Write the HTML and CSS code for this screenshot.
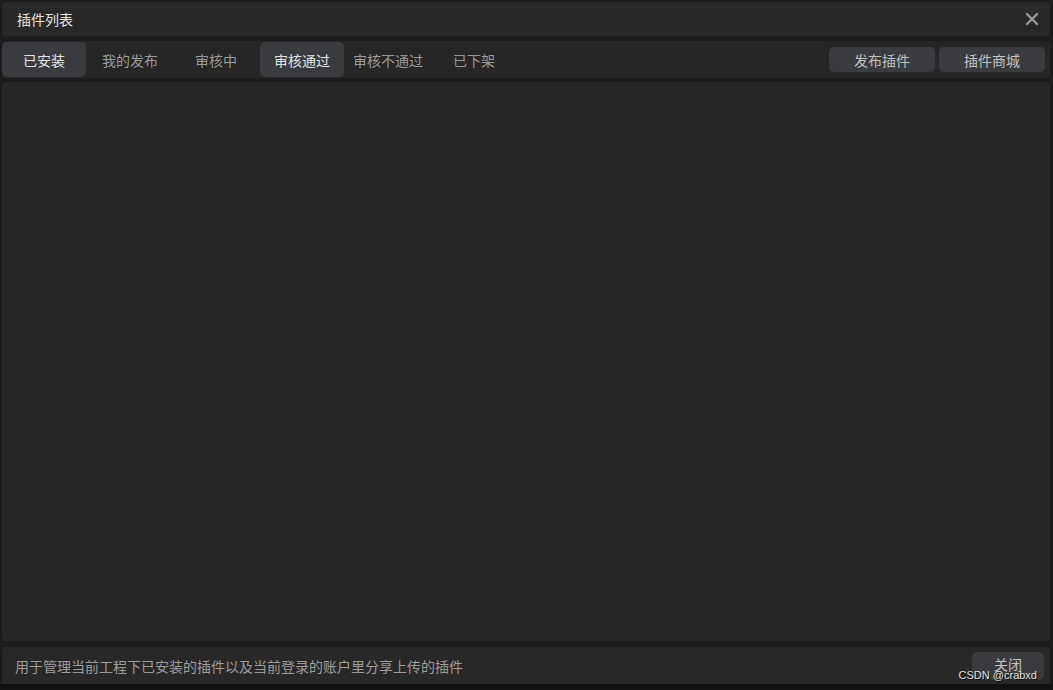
FILE: index.html
```html
<!DOCTYPE html>
<html>
<head>
  <meta charset="utf-8">
  <title>插件列表</title>
  <link rel="stylesheet" href="styles.css">
</head>
<body>
  <div class="window">
    <div class="title-bar">
      <span class="title">插件列表</span>
      <svg class="close-icon" width="14" height="14" viewBox="0 0 14 14">
        <path d="M2 2 L12 12 M12 2 L2 12" stroke="#9a9a9a" stroke-width="2.4" stroke-linecap="round"/>
      </svg>
    </div>

    <div class="tab-bar">
      <div class="tabs">
        <div class="tab active">已安装</div>
        <div class="tab">我的发布</div>
        <div class="tab">审核中</div>
        <div class="tab active">审核通过</div>
        <div class="tab">审核不通过</div>
        <div class="tab">已下架</div>
      </div>
      <div class="actions">
        <button class="btn">发布插件</button>
        <button class="btn">插件商城</button>
      </div>
    </div>

    <div class="content"></div>

    <div class="footer">
      <span class="hint">用于管理当前工程下已安装的插件以及当前登录的账户里分享上传的插件</span>
      <button class="btn close-btn">关闭</button>
    </div>
  </div>
  <div class="watermark">CSDN @crabxd</div>
</body>
</html>
```

FILE: styles.css
```css
body {
  margin: 0;
  background-color: #111;
  font-family: "Microsoft YaHei", "Noto Sans CJK SC", sans-serif;
  font-size: 14px;
  width: 1053px;
  height: 690px;
  overflow: hidden;
  position: relative;
}

.window {
  background-color: #1c1c1c;
  height: 684px;
  box-sizing: border-box;
  padding: 2px 3px 0 2px;
  display: flex;
  flex-direction: column;
}

.title-bar {
  height: 34px;
  background-color: #282828;
  border-radius: 4px;
  display: flex;
  align-items: center;
  justify-content: space-between;
  padding: 0 11px 0 15px;
  flex-shrink: 0;
}

.title {
  color: #e2e2e2;
}

.close-icon {
  display: block;
}

.tab-bar {
  height: 37px;
  margin-top: 5px;
  background-color: #262626;
  border-radius: 4px;
  display: flex;
  align-items: center;
  justify-content: space-between;
  padding: 0 5px 0 0;
  flex-shrink: 0;
}

.tabs {
  display: flex;
  gap: 2px;
}

.tab {
  width: 84px;
  height: 35px;
  line-height: 36px;
  text-align: center;
  color: #9a9a9a;
  border-radius: 5px;
}

.tab.active {
  background-color: #3a3b3e;
  color: #e4e4e4;
}

.actions {
  display: flex;
  gap: 4px;
}

.btn {
  font-family: inherit;
  font-size: 14px;
  background-color: #3a3b3e;
  color: #c2c2c2;
  border: none;
  border-radius: 5px;
  width: 106px;
  height: 25px;
  padding: 0;
}

.content {
  flex: 1;
  margin-top: 4px;
  background-color: #262626;
  border-radius: 4px;
}

.footer {
  height: 37px;
  margin-top: 6px;
  background-color: #282828;
  border-radius: 4px 4px 0 0;
  display: flex;
  align-items: center;
  justify-content: space-between;
  padding: 0 3px 0 13px;
  flex-shrink: 0;
}

.hint {
  color: #9c9c9c;
}

.close-btn {
  width: 72px;
  height: 28px;
  align-self: flex-start;
  margin-top: 5px;
  margin-right: 3px;
  padding-bottom: 5px;
  border-radius: 5px;
}

.watermark {
  position: absolute;
  right: 16px;
  bottom: 9px;
  font-family: "Liberation Sans", Arial, sans-serif;
  font-size: 11px;
  color: #e0e0e0;
  text-shadow: 1px 1px 1px #000;
}
```
